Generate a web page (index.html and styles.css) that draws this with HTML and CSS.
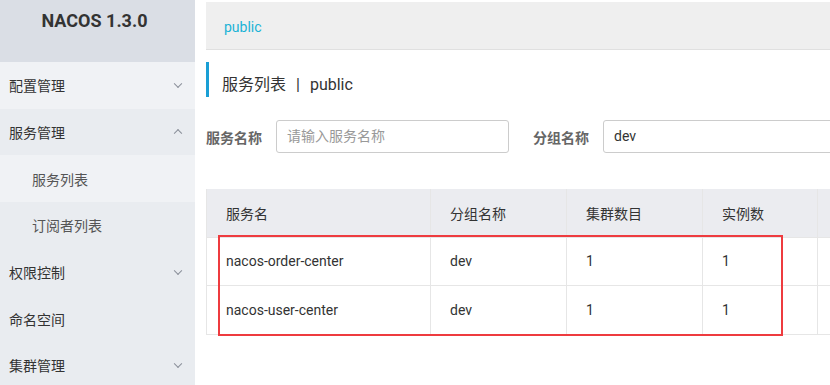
FILE: index.html
```html
<!DOCTYPE html>
<html lang="zh">
<head>
<meta charset="utf-8">
<title>Nacos</title>
<link rel="stylesheet" href="styles.css">
</head>
<body>
<div class="app">
  <aside class="sidebar">
    <div class="brand">NACOS 1.3.0</div>
    <ul class="menu">
      <li class="item top hover">配置管理<span class="chev down"></span></li>
      <li class="item top">服务管理<span class="chev up"></span></li>
      <li class="item sub active">服务列表</li>
      <li class="item sub">订阅者列表</li>
      <li class="item top">权限控制<span class="chev down"></span></li>
      <li class="item top">命名空间</li>
      <li class="item top">集群管理<span class="chev down"></span></li>
    </ul>
  </aside>
  <main class="main">
    <div class="ns-bar"><span class="ns">public</span></div>
    <h1 class="title">服务列表<span class="sep">|</span>public</h1>
    <div class="search">
      <label class="lbl">服务名称</label>
      <div class="input placeholder">请输入服务名称</div>
      <label class="lbl lbl2">分组名称</label>
      <div class="input wide">dev</div>
    </div>
    <div class="table-wrap">
      <table class="table">
        <colgroup>
          <col class="c1"><col class="c2"><col class="c3"><col class="c4"><col class="c5">
        </colgroup>
        <thead>
          <tr><th>服务名</th><th>分组名称</th><th>集群数目</th><th>实例数</th><th></th></tr>
        </thead>
        <tbody>
          <tr><td>nacos-order-center</td><td>dev</td><td>1</td><td>1</td><td></td></tr>
          <tr><td>nacos-user-center</td><td>dev</td><td>1</td><td>1</td><td></td></tr>
        </tbody>
      </table>
      <div class="highlight"></div>
    </div>
  </main>
</div>
</body>
</html>
```
FILE: styles.css
```css
* { box-sizing: border-box; }
html, body { margin: 0; padding: 0; background: #fff; }
body {
  font-family: Roboto, "Noto Sans CJK SC", sans-serif;
  color: #333;
  width: 830px;
  height: 385px;
  overflow: hidden;
}
.app { display: flex; height: 385px; }
.sidebar {
  width: 195px;
  flex: none;
  background: #e9ecf0;
}
.brand {
  height: 62px;
  background: #dadee5;
  text-align: center;
  font-weight: bold;
  font-size: 18px;
  line-height: 18px;
  padding-top: 12px;
  padding-right: 6px;
  color: #333;
}
.menu { list-style: none; margin: 0; padding: 0; }
.item {
  height: 46.7px;
  display: flex;
  align-items: center;
  font-size: 14px;
  position: relative;
}
.item.top { padding-left: 9px; color: #333; }
.item.sub { padding-left: 32px; color: #555; }
.item.hover, .item.active { background: #f0f2f5; }
.chev {
  position: absolute;
  right: 14px;
  top: 50%;
  width: 6px;
  height: 6px;
  border-right: 1px solid #8a8f99;
  border-bottom: 1px solid #8a8f99;
}
.chev.down { transform: translateY(-70%) rotate(45deg); }
.chev.up { transform: translateY(-30%) rotate(-135deg); }

.main {
  flex: 1;
  padding-left: 11px;
  padding-top: 2px;
  overflow: hidden;
}
.ns-bar {
  height: 48px;
  background: #efefef;
  border-bottom: 1px solid #e0e0e0;
  display: flex;
  align-items: center;
  padding-left: 18px;
  padding-top: 3px;
}
.ns { color: #1ab3d6; font-size: 14px; }
.title {
  margin: 12px 0 0 0;
  height: 35px;
  border-left: 3px solid #1a9fd5;
  padding-left: 13px;
  padding-top: 13px;
  font-size: 16px;
  font-weight: normal;
  line-height: 20px;
  color: #333;
}
.sep { margin: 0 10px; }
.search {
  display: flex;
  align-items: center;
  margin-top: 23px;
  width: 700px;
}
.lbl {
  font-size: 14px;
  font-weight: bold;
  color: #666;
  width: 70px;
  flex: none;
}
.lbl2 { margin-left: 24px; }
.input {
  height: 33px;
  border: 1px solid #ccc;
  border-radius: 3px;
  width: 233px;
  flex: none;
  font-size: 14px;
  line-height: 31px;
  padding-left: 10px;
  color: #333;
}
.input.placeholder { color: #999; }
.input.wide { width: 300px; }

.table-wrap {
  position: relative;
  margin-top: 36px;
  width: 700px;
}
.table {
  border-collapse: collapse;
  table-layout: fixed;
  width: 700px;
  font-size: 14px;
}
.c1 { width: 224px; }
.c2 { width: 136px; }
.c3 { width: 136px; }
.c4 { width: 115px; }
.c5 { width: 89px; }
.table th, .table td {
  text-align: left;
  padding: 0 0 0 19px;
  border: 1px solid #e6e6e6;
  font-weight: normal;
  color: #333;
}
.table th {
  background: #ebecf0;
  height: 48px;
  border-top: none;
}
.table td { height: 48.5px; }
.highlight {
  position: absolute;
  left: 12px;
  top: 46px;
  width: 565px;
  height: 101px;
  border: 2px solid #ee3b3f;
}
```
